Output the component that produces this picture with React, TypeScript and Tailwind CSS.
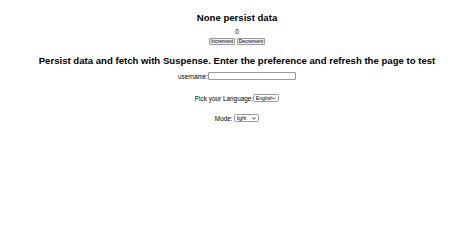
import { useState } from "react";

function Chevron() {
  return (
    <svg viewBox="0 0 10 6" className="w-[4px] h-[3px] shrink-0" fill="none">
      <path d="M1 1l4 4 4-4" stroke="#222" strokeWidth="2" strokeLinecap="round" strokeLinejoin="round" />
    </svg>
  );
}

function TinySelect({ value, onChange, options, width }: { value: string; onChange: (v: string) => void; options: string[]; width: string }) {
  return (
    <span className={`inline-flex items-center h-[8px] ${width} border border-[#9a9a9a] rounded-[1.5px] bg-white pl-[1.5px] pr-[2px]`}>
      <select
        value={value}
        onChange={(e) => onChange(e.target.value)}
        className="appearance-none bg-transparent outline-none flex-1 min-w-0 text-[5.3px] leading-[6px] p-0 m-0 text-black"
      >
        {options.map((o) => (
          <option key={o} value={o}>
            {o}
          </option>
        ))}
      </select>
      <Chevron />
    </span>
  );
}

export default function App() {
  const [count, setCount] = useState(0);
  const [username, setUsername] = useState("");
  const [lang, setLang] = useState("English");
  const [mode, setMode] = useState("light");

  return (
    <div className="min-h-[248px] bg-white text-black font-['Liberation_Sans',Arial,sans-serif] flex flex-col items-center pt-[12px] text-center">
      <h2 className="text-[9.6px] font-bold leading-[11px]">None persist data</h2>
      <div className="mt-[5px] text-[6.4px] leading-[7px]">{count}</div>
      <div className="mt-[3px] flex gap-[1.5px]">
        <button
          onClick={() => setCount((c) => c + 1)}
          className="h-[7px] px-[1px] text-[5px] leading-[5px] bg-[#efefef] border border-[#9a9a9a] rounded-[1px] text-black"
        >
          Increment
        </button>
        <button
          onClick={() => setCount((c) => c - 1)}
          className="h-[7px] px-[1px] text-[5px] leading-[5px] bg-[#efefef] border border-[#9a9a9a] rounded-[1px] text-black"
        >
          Decrement
        </button>
      </div>

      <h2 className="mt-[9.5px] text-[9.6px] font-bold leading-[11px]">
        Persist data and fetch with Suspense. Enter the preference and refresh the page to test
      </h2>

      <div className="mt-[6.5px] flex items-center text-[6.4px] leading-[7px]">
        <label htmlFor="username">username:</label>
        <input
          id="username"
          value={username}
          onChange={(e) => setUsername(e.target.value)}
          className="w-[88px] h-[8px] border border-[#9a9a9a] rounded-[1px] bg-white text-[5.3px] px-[1px] outline-none"
        />
      </div>

      <div className="mt-[14px] flex items-center text-[6.4px] leading-[7px]">
        <span>Pick your Language:</span>
        <TinySelect value={lang} onChange={setLang} options={["English", "Vietnamese"]} width="w-[26px]" />
      </div>

      <div className="mt-[12px] flex items-center gap-[1.5px] text-[6.4px] leading-[7px]">
        <span>Mode:</span>
        <TinySelect value={mode} onChange={setMode} options={["light", "dark"]} width="w-[25px]" />
      </div>
    </div>
  );
}
